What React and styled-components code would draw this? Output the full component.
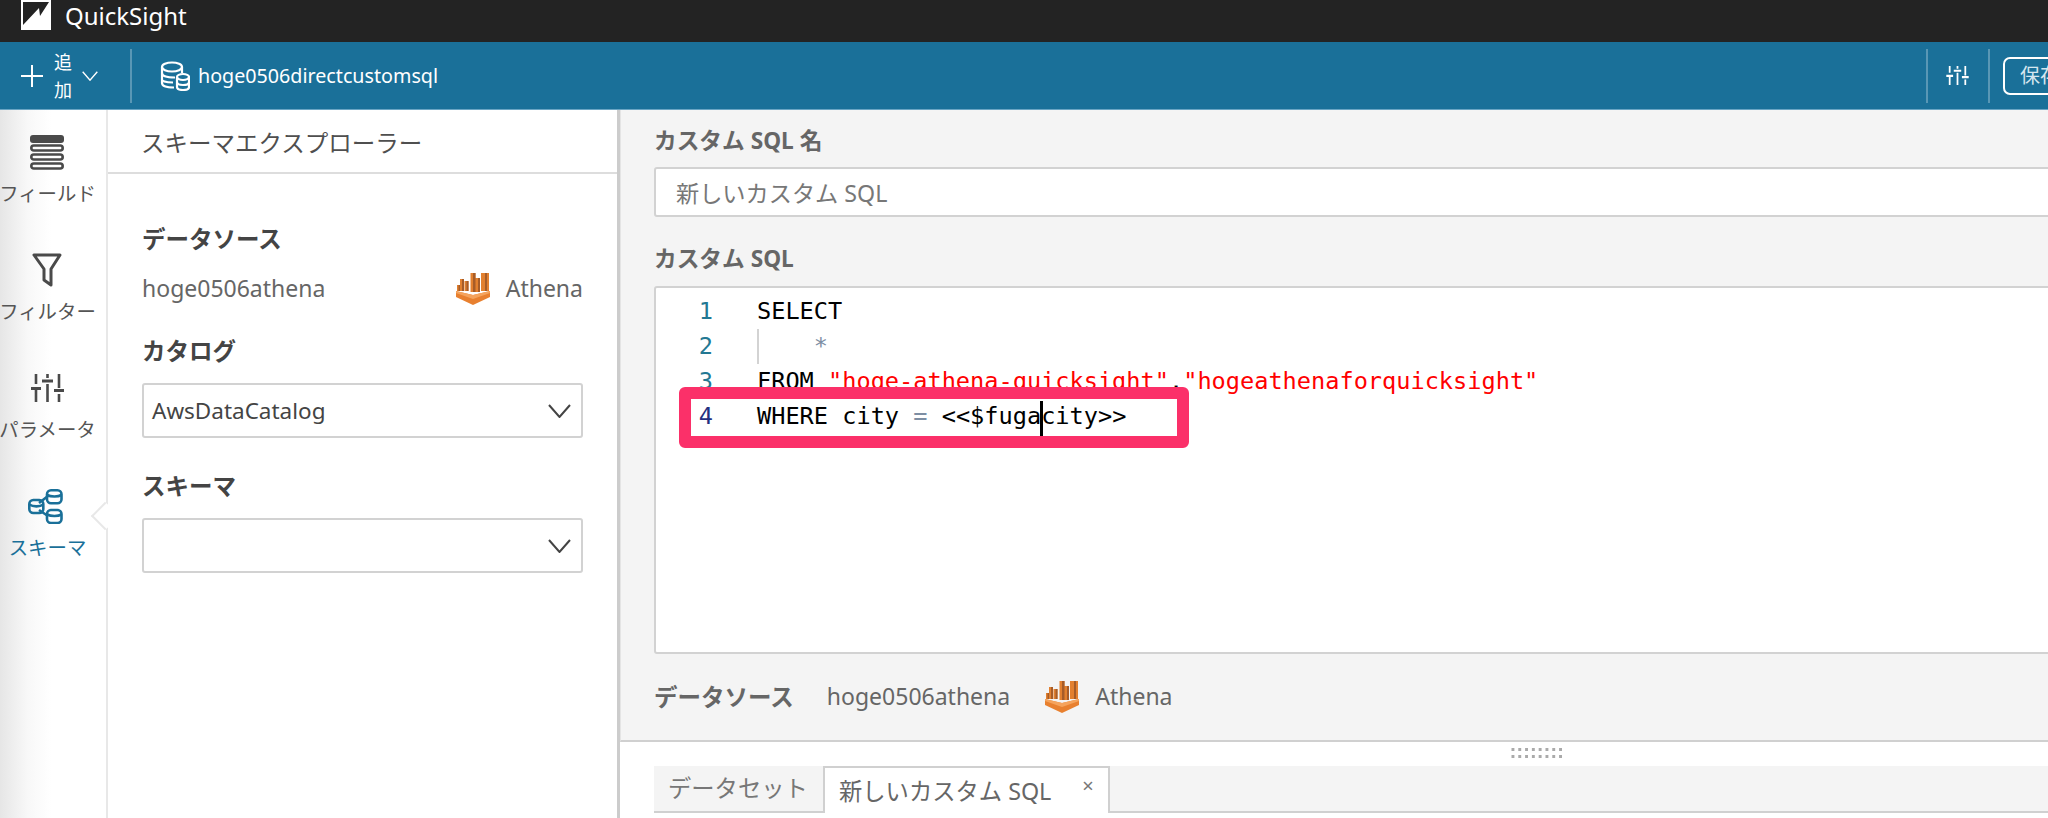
import React from "react";
import styled, { createGlobalStyle } from "styled-components";

const FONT = `"Noto Sans", "Noto Sans CJK JP", sans-serif`;
const MONO = `"DejaVu Sans Mono", monospace`;
const BLUE = "#1a7099";

const Global = createGlobalStyle`
  html, body { margin: 0; padding: 0; background: #fff; }
  body { font-family: ${FONT}; overflow: hidden; }
  * { box-sizing: border-box; }
`;

const Page = styled.div`
  width: 2048px;
  height: 818px;
  display: flex;
  flex-direction: column;
  overflow: hidden;
`;

const TopBar = styled.header`
  flex: 0 0 42px;
  background: #232323;
  display: flex;
  align-items: flex-start;
  padding-left: 21px;
  gap: 14px;
  color: #fff;
`;
const Brand = styled.span`
  font-size: 24px;
  line-height: 32px;
`;

const Toolbar = styled.div`
  flex: 0 0 68px;
  background: ${BLUE};
  border-bottom: 1px solid #6aa5c4;
  display: flex;
  align-items: center;
  color: #fff;
`;
const AddButton = styled.div`
  display: flex;
  align-items: center;
  width: 130px;
  padding-left: 21px;
`;
const AddText = styled.span`
  width: 18px;
  margin: 0 10px 0 11px;
  font-size: 18px;
  line-height: 28px;
  text-align: center;
`;
const Divider = styled.span`
  flex: 0 0 2px;
  height: 54px;
  background: rgba(255, 255, 255, 0.28);
`;
const DatasetName = styled.div`
  display: flex;
  align-items: center;
  gap: 8px;
  margin-left: 28px;
  font-size: 19.7px;
`;
const ToolbarRight = styled.div`
  margin-left: auto;
  margin-right: -32px;
  display: flex;
  align-items: center;
`;
const ToolIcon = styled.span`
  display: flex;
  margin: 0 19px 0 18px;
`;
const SaveButton = styled.span`
  width: 77px;
  height: 38px;
  margin-left: 13px;
  padding-left: 15px;
  border: 2px solid #fff;
  border-radius: 7px;
  font-size: 20px;
  line-height: 33px;
  color: #d5e6ef;
`;

const Body = styled.div`
  flex: 1;
  display: flex;
  min-height: 0;
`;

const Sidebar = styled.nav`
  flex: 0 0 108px;
  position: relative;
  padding-top: 19px;
  border-right: 2px solid #e8e8e8;
  background: linear-gradient(90deg, #e6e6e6 0, #f8f8f8 28px, #fff 52px);
`;
const NavItem = styled.div`
  width: 95px;
  height: 118px;
  display: flex;
  flex-direction: column;
  align-items: center;
  color: ${(p) => (p.$active ? BLUE : "#555")};
`;
const NavIcon = styled.span`
  height: 46px;
  display: flex;
  align-items: center;
  margin-right: ${(p) => (p.$nudge ? 5 : 1)}px;
`;
const NavLabel = styled.span`
  margin-top: 6px;
  font-size: 19.4px;
  line-height: 26px;
  white-space: nowrap;
`;
const Caret = styled.span`
  position: absolute;
  right: -9px;
  top: 396px;
  width: 20px;
  height: 20px;
  background: #fff;
  border-left: 2px solid #e8e8e8;
  border-bottom: 2px solid #e8e8e8;
  transform: rotate(45deg);
`;

const Panel = styled.aside`
  flex: 0 0 512px;
  background: #fff;
  border-right: 3px solid #ccc;
  display: flex;
  flex-direction: column;
`;
const PanelHeader = styled.div`
  height: 64px;
  padding: 15px 0 0 33px;
  border-bottom: 2px solid #ddd;
  font-size: 23.5px;
  line-height: 36px;
  color: #4f4f4f;
`;
const PanelBody = styled.div`
  padding: 47px 34px 0 34px;
  display: flex;
  flex-direction: column;
`;
const SectionTitle = styled.div`
  font-size: 23.5px;
  font-weight: 700;
  line-height: 36px;
  color: #444;
`;
const SourceRow = styled.div`
  display: flex;
  align-items: center;
  margin-top: ${(p) => p.$top || 0}px;
  height: 34px;
  font-size: 23px;
  color: ${(p) => p.$color || "#666"};
`;
const SourceType = styled.span`
  margin-left: auto;
  display: flex;
  align-items: center;
  gap: 16px;
`;
const PanelGroup = styled.div`
  margin-top: ${(p) => p.$top}px;
`;
const Select = styled.div`
  height: 55px;
  margin-top: 14px;
  padding: 0 10px 0 8px;
  display: flex;
  align-items: center;
  justify-content: space-between;
  border: 2px solid #d2d2d2;
  border-radius: 3px;
  font-size: 22.5px;
  color: #444;
`;
const Chevron = styled.svg`
  flex: none;
  fill: none;
  stroke: ${(p) => p.$color || "#444"};
  stroke-width: 2;
`;

const Main = styled.main`
  flex: 1;
  min-width: 0;
  display: flex;
  flex-direction: column;
`;
const Form = styled.section`
  flex: 0 0 632px;
  background: #f4f4f4;
  border-left: 1px solid #e4e4e4;
  border-bottom: 2px solid #d0d0d0;
  padding: 13px 0 0 33px;
`;
const FieldLabel = styled.div`
  font-size: 22.7px;
  font-weight: 700;
  line-height: 36px;
  color: #666;
  margin-top: ${(p) => p.$top || 0}px;
`;
const TextInput = styled.div`
  height: 50px;
  margin: 8px -10px 0 0;
  padding-left: 20px;
  background: #fff;
  border: 2px solid #d2d2d2;
  border-radius: 3px;
  font-size: 23.2px;
  line-height: 48px;
  color: #777;
`;
const Editor = styled.div`
  position: relative;
  height: 368px;
  margin: 9px -10px 0 0;
  padding-top: 6px;
  background: #fff;
  border: 2px solid #d2d2d2;
  border-radius: 3px;
  font-family: ${MONO};
  font-size: 23.6px;
  line-height: 35px;
`;
const Line = styled.div`
  display: flex;
  height: 35px;
  white-space: pre;
  color: #000;
`;
const LineNo = styled.span`
  flex: 0 0 101px;
  padding-right: 44px;
  text-align: right;
  color: ${(p) => (p.$active ? "#24307f" : "#237893")};
`;
const Code = styled.span`
  box-shadow: ${(p) => (p.$guide ? "inset 2px 0 0 #d3d3d3" : "none")};
`;
const Op = styled.span`
  color: #7d8ea3;
`;
const Str = styled.span`
  color: #f00;
`;
const TextCaret = styled.span`
  position: relative;
  &::after {
    content: "";
    position: absolute;
    left: -1px;
    top: -1px;
    width: 3px;
    height: 35px;
    background: #000;
  }
`;
const Highlight = styled.span`
  position: absolute;
  left: 23px;
  top: 99px;
  width: 510px;
  height: 61px;
  border: 12px solid #fb3069;
  border-radius: 6px;
`;
const SourceLine = styled.div`
  display: flex;
  align-items: center;
  height: 36px;
  margin-top: 24px;
  font-size: 23px;
  color: #666;
`;
const SourceLabel = styled.span`
  font-size: 23.5px;
  font-weight: 700;
  margin-right: 33px;
`;
const SourceTypeInline = styled.span`
  margin-left: 35px;
  display: flex;
  align-items: center;
  gap: 16px;
`;

const Bottom = styled.section`
  flex: 1;
  background: #fff;
`;
const GripRow = styled.div`
  height: 24px;
  padding: 6px 0 0 891px;
`;
const Grip = styled.div`
  width: 51px;
  height: 11px;
  background-image: conic-gradient(#aaa 25%, transparent 0);
  background-size: 6.8px 7px;
  background-position: -3.4px 0;
`;
const TabStrip = styled.div`
  margin-left: 34px;
  height: 47px;
  display: flex;
  background: #f4f4f4;
  border-bottom: 2px solid #d0d0d0;
`;
const Tab = styled.div`
  height: 47px;
  display: flex;
  align-items: center;
  font-size: 23.3px;
  padding-left: 14px;
  width: ${(p) => (p.$active ? 287 : 169)}px;
  color: ${(p) => (p.$active ? "#666" : "#777")};
  background: ${(p) => (p.$active ? "#fff" : "transparent")};
  ${(p) => p.$active && "border: 2px solid #d0d0d0; border-bottom: 0;"}
`;
const TabText = styled.span`
  margin-top: ${(p) => p.$top || 0}px;
`;
const Close = styled.span`
  margin: -11px 0 0 31px;
  font-size: 20px;
  color: #777;
`;

const Logo = () => (
  <svg width="30" height="30" viewBox="0 0 30 30">
    <path d="M0 0H30V30H0Z" fill="#fff" />
    <path d="M2 2H28L19 16 18 8 2 25Z" fill="#232323" />
  </svg>
);
const Plus = () => (
  <svg width="22" height="24" viewBox="0 0 22 24" fill="none" stroke="#fff" strokeWidth="2">
    <path d="M0 12H22M11 1V23" />
  </svg>
);
const DbIcon = () => (
  <svg width="30" height="30" viewBox="0 0 30 30" fill="none" stroke="#fff" strokeWidth="2.2">
    <ellipse cx="12" cy="6" rx="10" ry="4.5" />
    <path d="M2 6V22C2 25 7 26.5 14 26.5M22 6V12M2 12C2 15 7 16.5 15 16.5M2 18.5C2 20 5 21.5 13 21.5" />
    <ellipse cx="23" cy="16" rx="6" ry="3" />
    <path d="M17 16V26C17 28 20 29 23 29S29 28 29 26V16M17 21C17 23 20 24 23 24S29 23 29 21" />
  </svg>
);
const Sliders = ({ color = "#555", size = 33, h = 28, w = 2.6 }) => (
  <svg width={size} height={h} viewBox="0 0 33 28" fill="none" stroke={color} strokeWidth={w}>
    <path d="M5 0V10M5 16V28M16.500 0V4M16.500 10V28M28 0V14M28 20V28" />
    <path d="M0 14.500H10M11 7H22M23 16.500H33" strokeWidth={w + 0.6} />
  </svg>
);
const FieldsIcon = () => (
  <svg width="34" height="35" viewBox="0 0 34 35" fill="none" stroke="#4a4a4a" strokeWidth="2.6">
    <rect x="0" y="0" width="34" height="8" rx="3" fill="#4a4a4a" stroke="none" />
    <rect x="1.300" y="10.500" width="31.400" height="5" rx="2.500" />
    <rect x="1.300" y="19.500" width="31.400" height="5" rx="2.500" />
    <rect x="1.300" y="28.500" width="31.400" height="5" rx="2.500" />
  </svg>
);
const FilterIcon = () => (
  <svg width="30" height="34" viewBox="0 0 30 34" fill="none" stroke="#4a4a4a" strokeWidth="3" strokeLinejoin="round">
    <path d="M2 2H28L19 16V32L12 27V16Z" />
  </svg>
);
const SchemaIcon = () => (
  <svg width="35" height="35" viewBox="0 0 35 35" fill="none" stroke={BLUE} strokeWidth="2.6">
    <path d="M11 14L20 7M11 21L20 27" />
    <rect x="1.300" y="11" width="14" height="13" rx="4" />
    <path d="M1.300 15.500C5 18 12 18 15.300 15.500" />
    <rect x="19" y="1.300" width="14.500" height="13" rx="4" />
    <path d="M19 6C23 8 30 8 33.500 6" />
    <rect x="19" y="21" width="14.500" height="13" rx="4" />
    <path d="M19 25.500C23 27.500 30 27.500 33.500 25.500" />
  </svg>
);
const Athena = () => (
  <svg width="34" height="33" viewBox="0 0 34 33">
    <path d="M1 13H4V19H1ZM4 7H8V19H4ZM8.500 9H12.500V19H8.500ZM14.500 1H19.500V20H14.500ZM19.500 6H24V20H19.500ZM25 1H33V19H25Z" fill="#e2802f" />
    <path d="M2.500 13H4V19H2.500ZM6 7H8V19H6ZM10.500 9H12.500V19H10.500ZM17 1H19.500V20H17ZM22 6H24V20H22ZM29 1H31V19H29Z" fill="#a65c28" />
    <path d="M0 19L17 23L34 19V25L17 33L0 25Z" fill="#e8802f" />
    <path d="M0 19L17 23L34 19V21L17 27L0 21Z" fill="#f5a35c" />
  </svg>
);
const ChevronDown = ({ w = 23, h = 14, color }) => (
  <Chevron $color={color} width={w} height={h} viewBox="0 0 23 14">
    <path d="M1 1L11.500 13L22 1" />
  </Chevron>
);

const navItems = [
  { label: "フィールド", icon: <FieldsIcon /> },
  { label: "フィルター", icon: <FilterIcon /> },
  { label: "パラメータ", icon: <Sliders color="#4a4a4a" /> },
  { label: "スキーマ", icon: <SchemaIcon />, active: true },
];

export default function App() {
  return (
    <Page>
      <Global />
      <TopBar>
        <Logo />
        <Brand>QuickSight</Brand>
      </TopBar>
      <Toolbar>
        <AddButton>
          <Plus />
          <AddText>追加</AddText>
          <ChevronDown w={16} h={10} color="#fff" />
        </AddButton>
        <Divider />
        <DatasetName>
          <DbIcon />
          hoge0506directcustomsql
        </DatasetName>
        <ToolbarRight>
          <Divider />
          <ToolIcon>
            <Sliders color="#fff" size={23} h={19} w={2.6} />
          </ToolIcon>
          <Divider />
          <SaveButton>保存</SaveButton>
        </ToolbarRight>
      </Toolbar>
      <Body>
        <Sidebar>
          {navItems.map((n) => (
            <NavItem key={n.label} $active={n.active}>
              <NavIcon $nudge={n.active}>{n.icon}</NavIcon>
              <NavLabel>{n.label}</NavLabel>
            </NavItem>
          ))}
          <Caret />
        </Sidebar>
        <Panel>
          <PanelHeader>スキーマエクスプローラー</PanelHeader>
          <PanelBody>
            <SectionTitle>データソース</SectionTitle>
            <SourceRow $top={14}>
              hoge0506athena
              <SourceType>
                <Athena />
                Athena
              </SourceType>
            </SourceRow>
            <PanelGroup $top={28}>
              <SectionTitle>カタログ</SectionTitle>
              <Select>
                AwsDataCatalog
                <ChevronDown />
              </Select>
            </PanelGroup>
            <PanelGroup $top={30}>
              <SectionTitle>スキーマ</SectionTitle>
              <Select>
                <span />
                <ChevronDown />
              </Select>
            </PanelGroup>
          </PanelBody>
        </Panel>
        <Main>
          <Form>
            <FieldLabel>カスタム SQL 名</FieldLabel>
            <TextInput>新しいカスタム SQL</TextInput>
            <FieldLabel $top={24}>カスタム SQL</FieldLabel>
            <Editor>
              <Line>
                <LineNo>1</LineNo>
                <Code>SELECT</Code>
              </Line>
              <Line>
                <LineNo>2</LineNo>
                <Code $guide>
                  {"    "}
                  <Op>*</Op>
                </Code>
              </Line>
              <Line>
                <LineNo>3</LineNo>
                <Code>
                  FROM <Str>"hoge-athena-quicksight"</Str>.<Str>"hogeathenaforquicksight"</Str>
                </Code>
              </Line>
              <Line>
                <LineNo $active>4</LineNo>
                <Code>
                  WHERE city <Op>=</Op> {"<<$fuga"}
                  <TextCaret />
                  {"city>>"}
                </Code>
              </Line>
              <Highlight />
            </Editor>
            <SourceLine>
              <SourceLabel>データソース</SourceLabel>
              hoge0506athena
              <SourceTypeInline>
                <Athena />
                Athena
              </SourceTypeInline>
            </SourceLine>
          </Form>
          <Bottom>
            <GripRow>
              <Grip />
            </GripRow>
            <TabStrip>
              <Tab>
                <TabText $top={-6}>データセット</TabText>
              </Tab>
              <Tab $active>
                <TabText $top={-2}>新しいカスタム SQL</TabText>
                <Close>×</Close>
              </Tab>
            </TabStrip>
          </Bottom>
        </Main>
      </Body>
    </Page>
  );
}
